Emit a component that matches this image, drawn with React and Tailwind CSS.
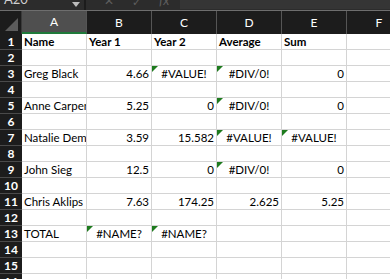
import React from "react";

const cols = ["A", "B", "C", "D", "E", "F"];

const T = (s, align = "l", tri = false, bold = false) => ({ s, align, tri, bold });

const rows = [
  [T("Name", "l", false, true), T("Year 1", "l", false, true), T("Year 2", "l", false, true), T("Average", "l", false, true), T("Sum", "l", false, true), T("")],
  [],
  [T("Greg Black"), T("4.66", "r"), T("#VALUE!", "c", true), T("#DIV/0!", "c", true), T("0", "r"), T("")],
  [],
  [T("Anne Carpen"), T("5.25", "r"), T("0", "r"), T("#DIV/0!", "c", true), T("0", "r"), T("")],
  [],
  [T("Natalie Dem"), T("3.59", "r"), T("15.582", "r"), T("#VALUE!", "c", true), T("#VALUE!", "c", true), T("")],
  [],
  [T("John Sieg"), T("12.5", "r"), T("0", "r"), T("#DIV/0!", "c", true), T("0", "r"), T("")],
  [],
  [T("Chris Aklips"), T("7.63", "r"), T("174.25", "r"), T("2.625", "r"), T("5.25", "r"), T("")],
  [],
  [T("TOTAL"), T("#NAME?", "c", true), T("#NAME?", "c", true), T(""), T(""), T("")],
  [],
  [],
  [],
];

function Cell({ c }) {
  const al = c && c.align === "r" ? "justify-end pr-[2px]" : c && c.align === "c" ? "justify-center" : "justify-start pl-[2px]";
  return (
    <div className={`relative flex h-[16px] w-[65px] shrink-0 items-center overflow-hidden border-b border-r border-[#d4d4d4] bg-white ${al}`}>
      {c && c.tri && (
        <div className="absolute left-0 top-0 h-0 w-0 border-r-[6px] border-t-[6px] border-r-transparent border-t-[#1e7b1e]" />
      )}
      <span className={`whitespace-nowrap text-[11.5px] leading-none text-black ${c && c.bold ? "font-bold" : ""}`}>
        {c ? c.s : ""}
      </span>
    </div>
  );
}

export default function App() {
  return (
    <div className="h-[279px] w-[390px] overflow-hidden bg-white" style={{ fontFamily: "Lato, 'Open Sans', sans-serif" }}>
      {/* formula bar */}
      <div className="flex h-[10px] overflow-hidden bg-[#2c2c2c]">
        <div className="flex w-[84px] shrink-0 items-start justify-between pl-[4px] pr-[4px]">
          <span className="-mt-[7px] text-[13px] leading-none text-[#cfcfcf]">A20</span>
          <span className="mt-[2px] h-0 w-0 border-l-[4px] border-r-[4px] border-t-[5px] border-l-transparent border-r-transparent border-t-[#bdbdbd]" />
        </div>
        <div className="w-[2px] shrink-0 bg-[#1c1c1c]" />
        <div className="flex w-[94px] shrink-0 items-start gap-[18px] pl-[18px] text-[#5e5e5e]">
          <span className="-mt-[5px] text-[12px] leading-none">✕</span>
          <span className="-mt-[4px] text-[11px] leading-none">✓</span>
          <span className="-mt-[6px] text-[13px] italic leading-none">fx</span>
        </div>
        <div className="mb-[1px] flex-1 bg-[#353535]" />
      </div>
      <div className="h-[1px] bg-[#6e6e6e]" />
      {/* column headers */}
      <div className="flex h-[23px] bg-[#1c1c1c]">
        <div className="relative w-[22px] shrink-0 border-r border-[#3a3a3a]">
          <div className="absolute bottom-[3px] right-[3px] h-0 w-0 border-b-[13px] border-l-[13px] border-b-[#5c5c5c] border-l-transparent" />
        </div>
        {cols.map((c, i) => (
          <div
            key={c}
            className={`flex w-[65px] shrink-0 items-center justify-center border-r border-[#555] pt-[1px] text-[12px] text-white ${
              i === 0 ? "border-b-2 border-b-[#1f7a3a] bg-[#4f4f4f]" : ""
            }`}
          >
            {c}
          </div>
        ))}
      </div>
      {/* rows */}
      {rows.map((r, ri) => (
        <div key={ri} className="flex">
          <div className="flex h-[16px] w-[22px] shrink-0 items-center justify-center border-b border-[#4a4a4a] bg-[#1c1c1c] text-[12px] font-bold leading-none text-white">
            {ri + 1}
          </div>
          {cols.map((c, ci) => (
            <Cell key={c} c={r[ci]} />
          ))}
        </div>
      ))}
    </div>
  );
}
